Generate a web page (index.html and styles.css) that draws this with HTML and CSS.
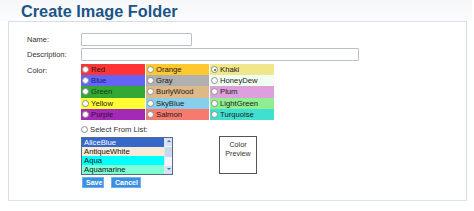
FILE: index.html
```html
<!DOCTYPE html>
<html lang="en">

<head>
    <meta charset="UTF-8">
    <meta name="viewport" content="width=device-width, initial-scale=1.0">
    <title>Create Image Folder</title>
    <link rel="stylesheet" href="styles.css">
</head>

<body>
    <div class="top">
        <h1 class="title">Create Image Folder</h1>
    </div>
    <div class="panel">
        <form class="form">
            <label class="lbl">Name:</label>
            <div><input type="text" class="text short"></div>

            <label class="lbl">Description:</label>
            <div><input type="text" class="text long"></div>

            <label class="lbl">Color:</label>
            <div class="color-field">
                <div class="swatches">
                    <label class="sw red"><span class="radio"></span>Red</label>
                    <label class="sw blue"><span class="radio"></span>Blue</label>
                    <label class="sw green"><span class="radio"></span>Green</label>
                    <label class="sw yellow"><span class="radio"></span>Yellow</label>
                    <label class="sw purple"><span class="radio"></span>Purple</label>
                    <label class="sw orange"><span class="radio"></span>Orange</label>
                    <label class="sw gray"><span class="radio"></span>Gray</label>
                    <label class="sw burly"><span class="radio"></span>BurlyWood</label>
                    <label class="sw sky"><span class="radio"></span>SkyBlue</label>
                    <label class="sw salmon"><span class="radio"></span>Salmon</label>
                    <label class="sw khaki"><span class="radio checked"></span>Khaki</label>
                    <label class="sw honeydew"><span class="radio"></span>HoneyDew</label>
                    <label class="sw plum"><span class="radio"></span>Plum</label>
                    <label class="sw lgreen"><span class="radio"></span>LightGreen</label>
                    <label class="sw turq"><span class="radio"></span>Turquoise</label>
                </div>

                <label class="from-list"><span class="radio"></span>Select From List:</label>

                <div class="list-row">
                    <div class="listbox">
                        <ul class="items">
                            <li class="selected">AliceBlue</li>
                            <li class="antique">AntiqueWhite</li>
                            <li class="aqua">Aqua</li>
                            <li class="aquamarine">Aquamarine</li>
                        </ul>
                        <div class="scrollbar">
                            <span class="arrow up"></span>
                            <span class="thumb"></span>
                            <span class="arrow down"></span>
                        </div>
                    </div>
                    <div class="preview">Color<br>Preview</div>
                </div>

                <div class="buttons">
                    <button type="button" class="btn">Save</button>
                    <button type="button" class="btn">Cancel</button>
                </div>
            </div>
        </form>
    </div>
</body>

</html>
```

FILE: styles.css
```css
/**** DEFAULTS ****/

* {
    padding: 0;
    margin: 0;
    box-sizing: border-box;
}

html {
    font-family: "Liberation Sans", Arial, sans-serif;
    font-size: 8px;
    color: #333;
}

body {
    background: #fff;
}

/**** HEADER ****/

.top {
    width: 472px;
    height: 21px;
    background: linear-gradient(#f6f7f9, #fbfcfd);
}

.title {
    font-size: 16.3px;
    font-weight: bold;
    line-height: 18px;
    padding: 2px 0 0 21px;
    color: #1b5486;
}

/**** PANEL ****/

.panel {
    margin-left: 8px;
    width: 459px;
    height: 180px;
    border: 1px solid #d6dee6;
    border-bottom-color: #d8e6f0;
    padding: 11px 0 0 18px;
}

.form {
    display: grid;
    grid-template-columns: 54px 1fr;
    row-gap: 2px;
    align-items: start;
}

.lbl {
    font-size: 7.5px;
    line-height: 13px;
    color: #333;
}

.text {
    display: block;
    height: 13px;
    border: 1px solid #b9c2cc;
    border-radius: 1px;
    background: #fff;
}

.short {
    width: 111px;
}

.long {
    width: 278px;
    margin-bottom: 1px;
}

/**** COLOURS ****/

.swatches {
    display: grid;
    grid-template-columns: 64px 63px 64px;
    grid-template-rows: repeat(5, 11.2px);
    grid-auto-flow: column;
    column-gap: 1px;
    width: 193px;
}

.sw {
    display: flex;
    align-items: center;
    font-size: 7.7px;
    color: #1a1a1a;
    padding-left: 1px;
}

.radio {
    display: inline-block;
    width: 7px;
    height: 7px;
    border-radius: 50%;
    border: 1px solid #8a8f96;
    background: #fff;
    margin-right: 2px;
    flex: none;
    position: relative;
}

.radio.checked::after {
    content: "";
    position: absolute;
    left: 1.5px;
    top: 1.5px;
    width: 2px;
    height: 2px;
    border-radius: 50%;
    background: #2d6a2d;
}

.red { background: #ff3535; }
.blue { background: #6464f6; color: #1a1a80; }
.green { background: #34a834; color: #0d3d0d; }
.yellow { background: #ffff33; }
.purple { background: #a22ab4; color: #3a0a40; }
.orange { background: #ffc82e; }
.gray { background: #b0b0b0; }
.burly { background: #deb887; }
.sky { background: #87ceeb; }
.salmon { background: #f87a6c; }
.khaki { background: #f0e68c; }
.honeydew { background: #f0fff0; }
.plum { background: #dda0dd; }
.lgreen { background: #90ee90; }
.turq { background: #40e0d0; }

.from-list {
    display: flex;
    align-items: center;
    font-size: 7.7px;
    height: 11px;
    margin-top: 4px;
}

/**** LIST ****/

.list-row {
    display: flex;
    align-items: flex-start;
    gap: 46px;
    margin-top: 1px;
}

.listbox {
    display: flex;
    width: 92px;
    height: 38px;
    border: 1px solid #5a6a86;
    margin-top: 1px;
    background: #fff;
}

.items {
    list-style: none;
    flex: 1;
}

.items li {
    height: 9px;
    line-height: 9px;
    font-size: 7.7px;
    padding-left: 2px;
    color: #111;
}

.items .selected {
    background: #3568c8;
    color: #fff;
}

.antique { background: #faebd7; }
.aqua { background: #00ffff; }
.aquamarine { background: #7fffd4; }

.scrollbar {
    width: 8px;
    display: flex;
    flex-direction: column;
    background: #f2f5fb;
    border-left: 1px solid #dfe6f2;
}

.arrow {
    height: 8px;
    background: #d6e2f6;
    position: relative;
}

.arrow::after {
    content: "";
    position: absolute;
    left: 1.5px;
    top: 2.5px;
    border-left: 2px solid transparent;
    border-right: 2px solid transparent;
}

.up::after {
    border-bottom: 2px solid #4d6a9a;
}

.down {
    margin-top: auto;
}

.down::after {
    border-top: 2px solid #4d6a9a;
}

.thumb {
    height: 10px;
    margin-top: 1px;
    background: #c9d7f0;
}

.preview {
    width: 38px;
    height: 38px;
    border: 1px solid #555;
    text-align: center;
    font-size: 7.2px;
    line-height: 9px;
    padding-top: 3px;
    color: #333;
}

/**** BUTTONS ****/

.buttons {
    display: flex;
    gap: 7px;
    margin-top: 2px;
    padding-left: 1px;
}

.btn {
    height: 11px;
    padding: 0 3px;
    font-family: inherit;
    font-size: 7px;
    font-weight: bold;
    color: #fff;
    background: #3a8fe2;
    border: 1px solid #6fb0ee;
}

.btn:first-child {
    width: 22px;
}

.btn:last-child {
    width: 30px;
}
```
